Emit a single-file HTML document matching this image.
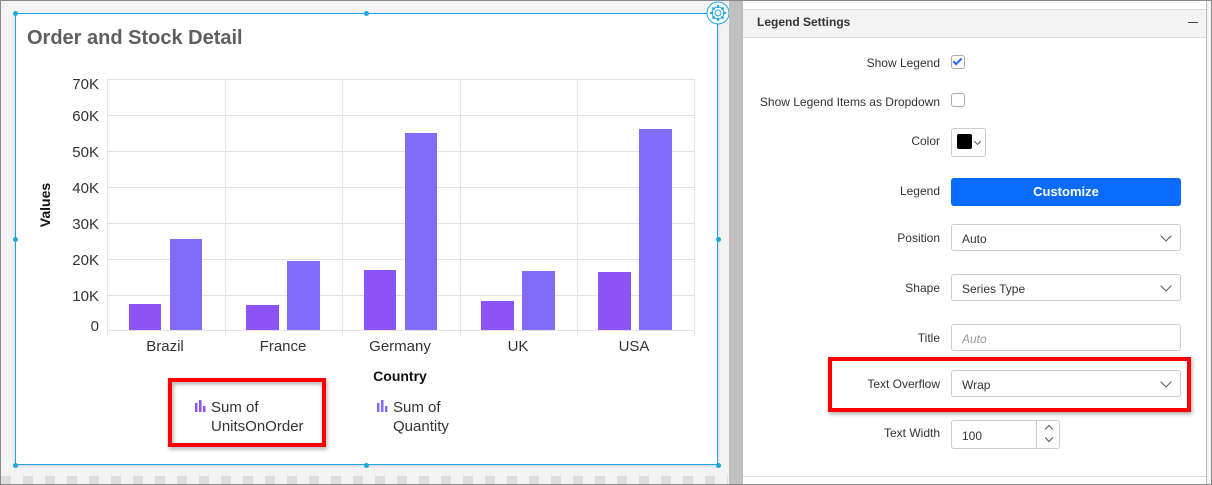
<!DOCTYPE html><html><head><style>
body{margin:0;width:1212px;height:485px;overflow:hidden;font-family:"Liberation Sans",Arial,sans-serif;background:#f3f3f3;position:relative}
.a{position:absolute}
.lbl{position:absolute;right:272px;font-size:12px;color:#333;text-align:right;white-space:nowrap}
.inp{position:absolute;left:951px;width:230px;height:27px;border:1px solid #ccc;border-radius:3px;background:#fff;font-size:12px;color:#333;box-sizing:border-box;padding:7px 10px}
.chev{position:absolute;right:10px;top:7px;width:7px;height:7px;border-right:1px solid #555;border-bottom:1px solid #555;transform:rotate(45deg)}
</style></head><body>
<div class="a" style="left:0;top:0;width:1210px;height:483px;border:1px solid #888"></div>
<div class="a" style="left:1px;top:476px;width:727px;height:8px;background:repeating-linear-gradient(90deg,#ddd 0 10px,#f3f3f3 10px 22px)"></div>
<div class="a" style="left:15px;top:13px;width:703px;height:452px;background:#fff;border:1px solid #1ea7e0;box-sizing:border-box;box-shadow:0 1px 3px rgba(0,0,0,.15)"></div>
<div class="a" style="left:13px;top:11px;width:5px;height:5px;border-radius:50%;background:#1ea7e0"></div>
<div class="a" style="left:364px;top:11px;width:5px;height:5px;border-radius:50%;background:#1ea7e0"></div>
<div class="a" style="left:13px;top:237px;width:5px;height:5px;border-radius:50%;background:#1ea7e0"></div>
<div class="a" style="left:716px;top:237px;width:5px;height:5px;border-radius:50%;background:#1ea7e0"></div>
<div class="a" style="left:13px;top:463px;width:5px;height:5px;border-radius:50%;background:#1ea7e0"></div>
<div class="a" style="left:364px;top:463px;width:5px;height:5px;border-radius:50%;background:#1ea7e0"></div>
<div class="a" style="left:716px;top:463px;width:5px;height:5px;border-radius:50%;background:#1ea7e0"></div>
<svg class="a" style="left:706px;top:1px" width="24" height="24" viewBox="0 0 24 24"><circle cx="12" cy="12" r="11" fill="#fff" stroke="#1ea7e0"/><circle cx="12" cy="12" r="3" fill="none" stroke="#1ea7e0"/><path d="M12 4v3M12 17v3M4 12h3M17 12h3M6.5 6.5l2 2M15.5 15.5l2 2M6.5 17.5l2-2M15.5 8.5l2-2" stroke="#1ea7e0" stroke-width="2"/><circle cx="12" cy="12" r="6" fill="none" stroke="#1ea7e0"/></svg>
<div class="a" style="left:27px;top:27px;font-size:20px;font-weight:bold;color:#5f5f5f">Order and Stock Detail</div>
<svg class="a" style="left:0;top:0" width="720" height="470">
<g stroke="#e2e2e2" stroke-width="1">
<line x1="107" y1="79.5" x2="695" y2="79.5"/><line x1="107" y1="115.5" x2="695" y2="115.5"/><line x1="107" y1="151.5" x2="695" y2="151.5"/><line x1="107" y1="187.5" x2="695" y2="187.5"/><line x1="107" y1="223.5" x2="695" y2="223.5"/><line x1="107" y1="259.5" x2="695" y2="259.5"/><line x1="107" y1="295.5" x2="695" y2="295.5"/><line x1="107" y1="330.5" x2="695" y2="330.5"/>
<line x1="107.5" y1="79" x2="107.5" y2="336"/><line x1="225.5" y1="79" x2="225.5" y2="336"/><line x1="342.5" y1="79" x2="342.5" y2="336"/><line x1="460.5" y1="79" x2="460.5" y2="336"/><line x1="577.5" y1="79" x2="577.5" y2="336"/><line x1="694.5" y1="79" x2="694.5" y2="336"/>
</g>
<g fill="#8c54f7"><rect x="129" y="304" width="32" height="26"/><rect x="246" y="305" width="33" height="25"/><rect x="364" y="270" width="32" height="60"/><rect x="481" y="301" width="33" height="29"/><rect x="598" y="272" width="33" height="58"/></g>
<g fill="#806cf7"><rect x="170" y="239" width="32" height="91"/><rect x="287" y="261" width="33" height="69"/><rect x="405" y="133" width="32" height="197"/><rect x="522" y="271" width="33" height="59"/><rect x="639" y="129" width="33" height="201"/></g>
<g font-size="15" fill="#333" text-anchor="end" font-family="Liberation Sans"><text x="99" y="89">70K</text><text x="99" y="121">60K</text><text x="99" y="157">50K</text><text x="99" y="193">40K</text><text x="99" y="229">30K</text><text x="99" y="265">20K</text><text x="99" y="301">10K</text><text x="99" y="331">0</text></g>
<g font-size="15" fill="#333" text-anchor="middle" font-family="Liberation Sans"><text x="165" y="351">Brazil</text><text x="283" y="351">France</text><text x="400" y="351">Germany</text><text x="518" y="351">UK</text><text x="634" y="351">USA</text></g>
<text x="400" y="381" font-size="14" font-weight="bold" text-anchor="middle" fill="#111" font-family="Liberation Sans">Country</text>
<text transform="translate(50 205) rotate(-90)" font-size="14" font-weight="bold" text-anchor="middle" fill="#111" font-family="Liberation Sans">Values</text>
<g fill="#8c54f7"><rect x="195" y="403" width="2.5" height="9"/><rect x="199" y="400" width="2.5" height="12"/><rect x="203" y="406" width="2.5" height="6"/></g>
<g fill="#806cf7"><rect x="377" y="403" width="2.5" height="9"/><rect x="381" y="400" width="2.5" height="12"/><rect x="385" y="406" width="2.5" height="6"/></g>
<g font-size="15" fill="#333" font-family="Liberation Sans"><text x="211" y="412">Sum of</text><text x="211" y="431">UnitsOnOrder</text><text x="393" y="412">Sum of</text><text x="393" y="431">Quantity</text></g>
<rect x="170" y="380" width="154" height="65" fill="none" stroke="#f00" stroke-width="4" style="filter:drop-shadow(1px 2px 2px rgba(0,0,0,.35))"/>
</svg>
<div class="a" style="left:729px;top:1px;width:13px;height:483px;background:#c0c0c0"></div>
<div class="a" style="left:742px;top:1px;width:465px;height:483px;background:#fff;border-left:1px solid #bbb;border-right:1px solid #bbb;box-sizing:border-box"></div>
<div class="a" style="left:743px;top:9px;width:463px;height:27px;background:#f4f4f4;border-top:1px solid #ddd;border-bottom:1px solid #ddd"></div>
<div class="a" style="left:757px;top:15px;font-size:12px;font-weight:bold;color:#333">Legend Settings</div>
<div class="a" style="left:1188px;top:22px;width:10px;height:1px;background:#444"></div>
<div class="a" style="left:743px;top:476px;width:463px;height:1px;background:#ddd"></div>
<div class="lbl" style="top:56px">Show Legend</div>
<div class="a" style="left:951px;top:55px;width:12px;height:12px;border:1px solid #aaa;border-radius:3px"></div>
<div class="a" style="left:955px;top:56px;width:3px;height:7px;border-right:2px solid #2b6cf5;border-bottom:2px solid #2b6cf5;transform:rotate(45deg)"></div>
<div class="lbl" style="top:95px">Show Legend Items as Dropdown</div>
<div class="a" style="left:951px;top:93px;width:12px;height:12px;border:1px solid #aaa;border-radius:3px"></div>
<div class="lbl" style="top:134px">Color</div>
<div class="a" style="left:951px;top:128px;width:33px;height:27px;border:1px solid #ccc;border-radius:3px"></div>
<div class="a" style="left:957px;top:134px;width:15px;height:15px;background:#000;border-radius:2px"></div>
<div class="a" style="left:975px;top:139px;width:4px;height:4px;border-right:1px solid #555;border-bottom:1px solid #555;transform:rotate(45deg)"></div>
<div class="lbl" style="top:184px">Legend</div>
<div class="a" style="left:951px;top:178px;width:230px;height:28px;background:#0a6cff;border-radius:3px;color:#fff;font-size:13px;font-weight:bold;text-align:center;line-height:28px">Customize</div>
<div class="lbl" style="top:231px">Position</div>
<div class="inp" style="top:224px">Auto<span class="chev"></span></div>
<div class="lbl" style="top:281px">Shape</div>
<div class="inp" style="top:274px">Series Type<span class="chev"></span></div>
<div class="lbl" style="top:331px">Title</div>
<div class="inp" style="top:324px;color:#999;font-style:italic">Auto</div>
<div class="lbl" style="top:377px">Text Overflow</div>
<div class="inp" style="top:370px">Wrap<span class="chev"></span></div>
<div class="a" style="left:828px;top:357px;width:355px;height:47px;border:4px solid #f00;box-shadow:1px 2px 4px rgba(0,0,0,.35)"></div>
<div class="lbl" style="top:426px">Text Width</div>
<div class="inp" style="top:420px;width:109px;height:29px;padding-top:8px">100</div>
<div class="a" style="left:1036px;top:421px;width:1px;height:27px;background:#ccc"></div>
<div class="a" style="left:1046px;top:426px;width:5px;height:5px;border-left:1px solid #555;border-top:1px solid #555;transform:rotate(45deg)"></div>
<div class="a" style="left:1046px;top:435px;width:5px;height:5px;border-right:1px solid #555;border-bottom:1px solid #555;transform:rotate(45deg)"></div>
</body></html>
